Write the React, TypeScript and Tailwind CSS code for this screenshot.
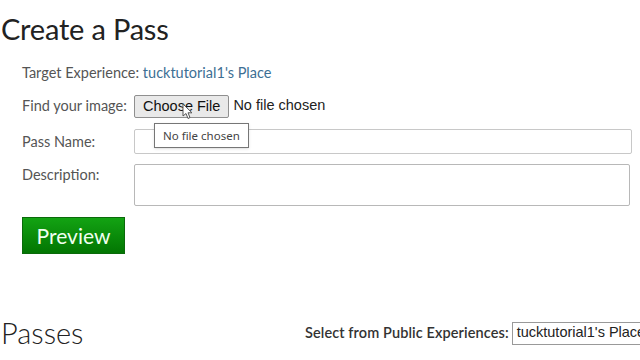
import React from 'react'

export default function App() {
  const label = 'w-[112px] shrink-0 text-[14.5px] text-[#555]'
  return (
    <div className="w-[640px] h-[360px] overflow-hidden bg-white relative" style={{ fontFamily: 'Lato, "Noto Sans", sans-serif' }}>
      <h1 className="pl-[1px] pt-[9px] text-[29px] leading-[40px] text-[#222] tracking-[-0.2px]">Create a Pass</h1>

      <div className="pl-[22px] mt-[13px]">
        <div className="flex items-center h-[22px] text-[14.5px]">
          <span className="text-[#555]">Target Experience:&nbsp;</span>
          <span className="text-[#3d6f94]">tucktutorial1's Place</span>
        </div>

        <div className="flex items-center mt-[10px] h-[24px] relative">
          <span className={label}>Find your image:</span>
          <button className="h-[23px] px-[8px] border border-[#8f8f8f] rounded-[2px] bg-[#e9e9e9] text-[14.5px] text-[#111]" style={{ fontFamily: '"Liberation Sans", Arial, sans-serif' }}>
            Choose File
          </button>
          <span className="ml-[4px] text-[14.5px] text-[#222]" style={{ fontFamily: '"Liberation Sans", Arial, sans-serif' }}>No file chosen</span>

          {/* mouse pointer */}
          <svg className="absolute left-[160px] top-[9px]" width="11" height="17" viewBox="0 0 11 17">
            <path d="M1 1 L1 13 L4 10.5 L6 15.5 L8 14.5 L6 9.8 L10 9.8 Z" fill="white" stroke="#555" strokeWidth="1" strokeLinejoin="round" />
          </svg>
          {/* tooltip */}
          <div className="absolute left-[132px] top-[29px] z-10 h-[25px] px-[8px] flex items-center border border-[#767676] bg-white text-[11.5px] text-[#444] shadow-sm" style={{ fontFamily: '"Noto Sans", sans-serif' }}>
            No file chosen
          </div>
        </div>

        <div className="flex items-center mt-[11px]">
          <span className={label}>Pass Name:</span>
          <div className="w-[498px] h-[25px] border border-[#c8c8c8] rounded-[2px]" />
        </div>

        <div className="flex items-start mt-[10px]">
          <span className={label}>Description:</span>
          <div className="w-[496px] h-[42px] border border-[#b8b8b8] rounded-[2px]" />
        </div>

        <button className="mt-[11px] w-[103px] h-[37px] border border-[#0a6a0a] bg-gradient-to-b from-[#13a313] to-[#037603] text-[#f0fff0] text-[21px] leading-none">
          Preview
        </button>
      </div>

      <div className="flex items-center mt-[64px] h-[30px]">
        <h2 className="pl-[1px] text-[29px] font-light text-[#222] w-[305px] shrink-0">Passes</h2>
        <span className="shrink-0 whitespace-nowrap text-[14.5px] font-semibold text-[#333] mr-[3px] tracking-[0.1px]">Select from Public Experiences:</span>
        <div className="h-[23px] px-[4px] w-[140px] shrink-0 border border-[#999] flex items-center text-[14.5px] text-[#222] whitespace-nowrap" style={{ fontFamily: '"Liberation Sans", Arial, sans-serif' }}>
          tucktutorial1's Place
        </div>
      </div>
    </div>
  )
}
